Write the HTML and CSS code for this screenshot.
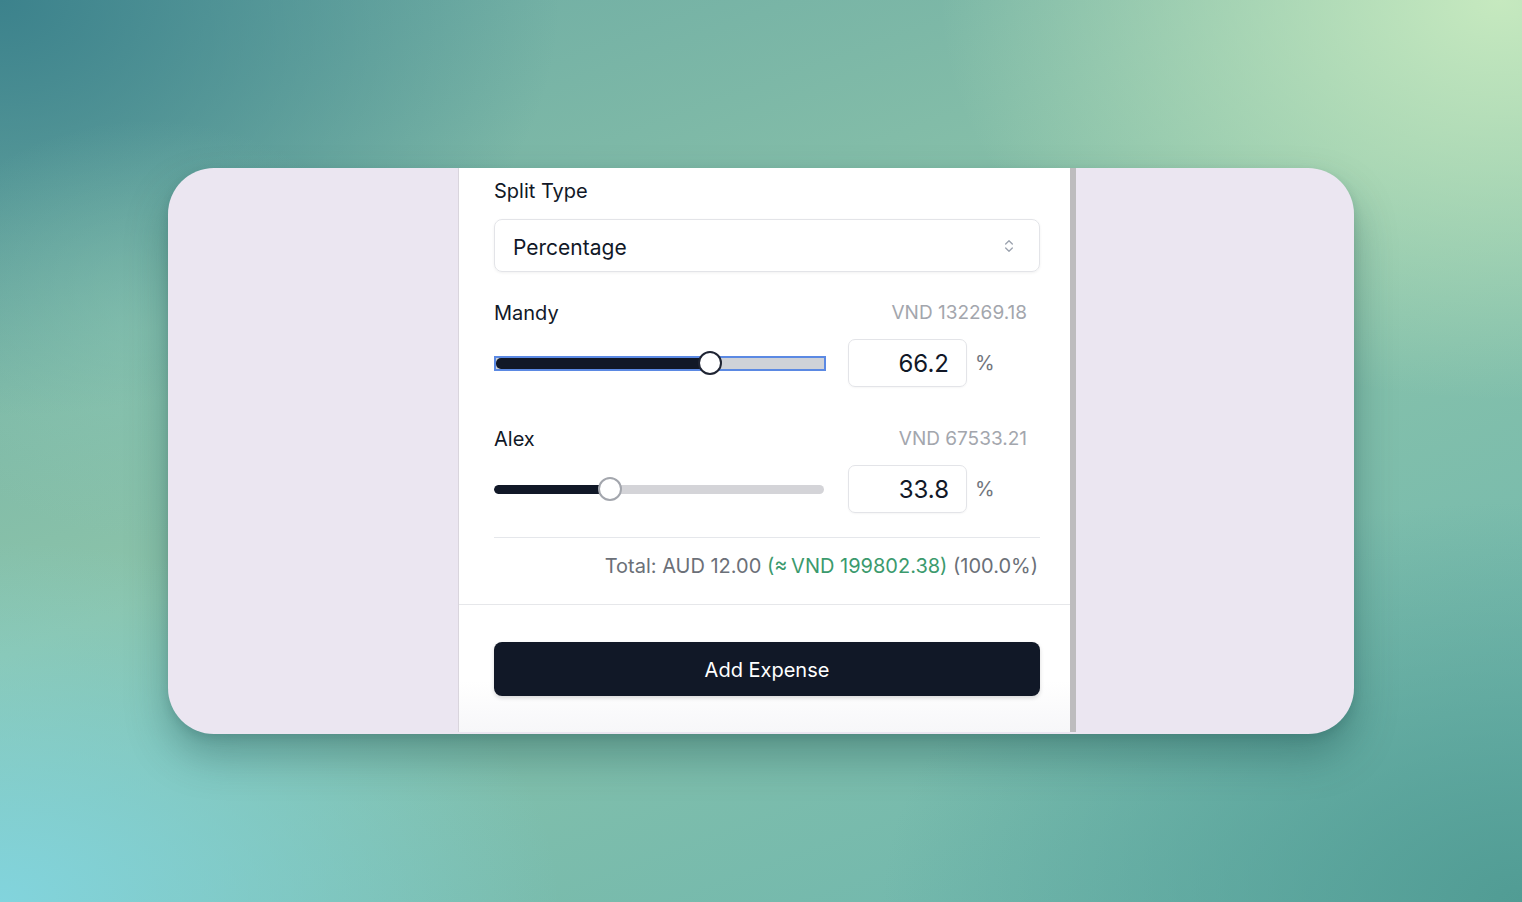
FILE: index.html
```html
<!DOCTYPE html>
<html lang="en">
<head>
<meta charset="utf-8">
<title>Split Type</title>
<link rel="stylesheet" href="styles.css">
</head>
<body>
<div class="stage">
  <div class="card">
    <div class="panel">
      <div class="content">
        <div class="label">Split Type</div>
        <div class="select">
          <span>Percentage</span>
          <svg class="chev" viewBox="0 0 24 24" width="18" height="18" fill="none" stroke="currentColor" stroke-width="2" stroke-linecap="round" stroke-linejoin="round"><path d="M7 15l5 5 5-5"/><path d="M7 9l5-5 5 5"/></svg>
        </div>

        <div class="person">
          <div class="person-head">
            <span class="name">Mandy</span>
            <span class="amount">VND 132269.18</span>
          </div>
          <div class="person-row">
            <div class="slider focused">
              <div class="track"><div class="fill" style="width: calc((100% - 24px) * 0.662 + 12px)"></div></div>
              <div class="thumb dark" style="left: calc((100% - 24px) * 0.662)"></div>
            </div>
            <div class="num">66.2</div>
            <span class="pct">%</span>
          </div>
        </div>

        <div class="person second">
          <div class="person-head">
            <span class="name">Alex</span>
            <span class="amount">VND 67533.21</span>
          </div>
          <div class="person-row">
            <div class="slider">
              <div class="track"><div class="fill" style="width: calc((100% - 24px) * 0.338 + 12px)"></div></div>
              <div class="thumb" style="left: calc((100% - 24px) * 0.338)"></div>
            </div>
            <div class="num">33.8</div>
            <span class="pct">%</span>
          </div>
        </div>

        <div class="total">Total: AUD 12.00 <span class="conv">(≈&#8239;VND 199802.38)</span> (100.0%)</div>
      </div>
      <div class="footer">
        <button class="btn">Add Expense</button>
      </div>
    </div>
    <div class="scrollbar"></div>
  </div>
</div>
</body>
</html>
```
FILE: styles.css
```css
* { box-sizing: border-box; }
html, body { margin: 0; padding: 0; }
body {
  width: 1522px;
  height: 902px;
  overflow: hidden;
  font-family: Inter, "Noto Sans", sans-serif;
  background:
    radial-gradient(ellipse 360px 300px at 150px 330px, rgba(140, 200, 180, 0.55), rgba(140, 200, 180, 0) 70%),
    radial-gradient(ellipse 700px 500px at 1500px 0px, #c6e9bf 0%, rgba(198, 233, 191, 0) 80%),
    radial-gradient(ellipse 700px 520px at 0px 0px, #3c828c 0%, rgba(60, 130, 140, 0) 80%),
    radial-gradient(ellipse 700px 450px at 0px 902px, #82d4dd 0%, rgba(130, 212, 221, 0) 80%),
    radial-gradient(ellipse 800px 500px at 1522px 902px, #519c94 0%, rgba(81, 156, 148, 0) 80%),
    linear-gradient(160deg, #6aa9a3 0%, #8cc4aa 45%, #6bb5ae 100%);
}
.stage {
  padding: 168px 0 0 168px;
}
.card {
  width: 1186px;
  height: 566px;
  border-radius: 46px;
  background: #ebe6f1;
  box-shadow: 0 22px 40px rgba(20, 70, 70, 0.35), 0 4px 10px rgba(20, 70, 70, 0.15);
  overflow: hidden;
  display: flex;
  padding-left: 290px;
}
.panel {
  width: 612px;
  height: 564px;
  background: #ffffff;
  border-left: 1px solid #d9d5dd;
  display: flex;
  flex-direction: column;
}
.scrollbar {
  width: 6px;
  height: 564px;
  background: #bdbcbe;
}
.content {
  padding: 9px 30px 0 35px;
}
.label {
  font-size: 20px;
  line-height: 28px;
  color: #111827;
}
.select {
  margin-top: 14px;
  height: 53px;
  border: 1px solid #e3e4e8;
  border-radius: 8px;
  box-shadow: 0 1px 3px rgba(0, 0, 0, 0.06);
  display: flex;
  align-items: center;
  justify-content: space-between;
  padding: 3px 22px 0 18px;
  font-size: 21px;
  color: #111827;
}
.chev { color: #9ca3af; width: 16px; height: 18px; margin-top: -3px; }
.person { margin-top: 27px; }
.person.second { margin-top: 38px; }
.person-head {
  display: flex;
  justify-content: space-between;
  align-items: center;
  line-height: 28px;
}
.name { font-size: 20px; color: #111827; }
.amount { font-size: 19px; color: #a3a6ad; padding-right: 13px; }
.person-row {
  margin-top: 12px;
  display: flex;
  align-items: center;
  height: 48px;
}
.slider {
  position: relative;
  width: 332px;
  height: 24px;
  display: flex;
  align-items: center;
}
.track {
  width: 100%;
  height: 9px;
  background: #d4d4d8;
  border-radius: 5px;
  overflow: hidden;
}
.person.second .track { width: 330px; }
.fill {
  height: 100%;
  background: #111827;
  border-radius: 5px 0 0 5px;
}
.slider.focused .track {
  height: 15px;
  border: 2px solid #5b89e3;
  border-radius: 0;
  background: #cfd2d8;
}
.thumb {
  position: absolute;
  top: 0;
  width: 24px;
  height: 24px;
  border-radius: 50%;
  background: #ffffff;
  border: 2px solid #a3a6ad;
}
.thumb.dark { border-color: #1f2433; left: -2px; }
.num {
  margin-left: 22px;
  width: 119px;
  height: 48px;
  border: 1px solid #e3e4e8;
  border-radius: 7px;
  box-shadow: 0 1px 2px rgba(0, 0, 0, 0.04);
  display: flex;
  align-items: center;
  justify-content: flex-end;
  padding-right: 17px;
  font-size: 24px;
  color: #111827;
}
.pct {
  margin-left: 8px;
  font-size: 20px;
  color: #71757d;
}
.total {
  margin-top: 24px;
  border-top: 1px solid #e5e7eb;
  padding-top: 14px;
  text-align: right;
  padding-right: 2px;
  font-size: 20px;
  line-height: 28px;
  color: #6b7078;
}
.conv { color: #3b9a6d; }
.footer {
  margin-top: 24px;
  border-top: 1px solid #e6e7ea;
  padding: 37px 30px 0 35px;
  flex: 1;
  background: linear-gradient(#ffffff 60%, #f7f7f9 100%);
}
.btn {
  width: 100%;
  height: 54px;
  border: none;
  border-radius: 8px;
  background: #111827;
  color: #ffffff;
  font-family: Inter, "Noto Sans", sans-serif;
  font-size: 20px;
  padding-top: 2px;
  box-shadow: 0 2px 4px rgba(0, 0, 0, 0.15);
}
```
